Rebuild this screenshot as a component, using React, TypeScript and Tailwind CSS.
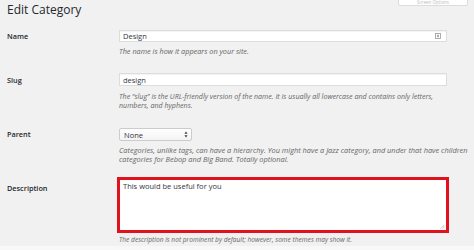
import React from 'react';

function FieldRow({ label, labelTop, children }: { label: string; labelTop: string; children: React.ReactNode }) {
    return (
        <div className="flex">
            <div className={`w-[119px] shrink-0 pl-[7px] text-[7.3px] font-semibold leading-[10px] text-[#23282d] ${labelTop}`}>
                {label}
            </div>
            <div className="w-[328px] shrink-0">{children}</div>
        </div>
    );
}

export default function App() {
    return (
        <div className="relative h-[250px] w-[474px] overflow-hidden bg-[#f1f1f1] font-['Open_Sans',sans-serif]">
            {/* screen options tab at the very top */}
            <div className="absolute left-[398px] top-[-1px] flex h-[7px] w-[70px] items-center justify-center rounded-b-[2px] border border-[#dcdcdc] bg-white text-[4.5px] leading-[5px] text-[#bbb]">
                Screen Options
            </div>

            <h1 className="pl-[7px] pt-[1px] text-[12px] font-normal leading-[17px] text-[#23282d]">Edit Category</h1>

            <div className="mt-[12px] flex flex-col">
                {/* Name */}
                <FieldRow label="Name" labelTop="pt-[1px]">
                    <div className="flex h-[12px] items-center justify-between border border-[#ddd] bg-white pl-[3px] pr-[5px] shadow-[inset_0_1px_1px_rgba(0,0,0,0.05)]">
                        <span className="text-[7.5px] leading-[10px] text-[#32373c]">Design</span>
                        <svg width="6" height="6" viewBox="0 0 6 6" className="shrink-0">
                            <rect x="0.5" y="0.5" width="5" height="5" fill="none" stroke="#999" strokeWidth="0.8" />
                            <rect x="2" y="1.8" width="2" height="2.4" fill="#aaa" />
                        </svg>
                    </div>
                    <p className="mt-[4.5px] text-[7.3px] italic leading-[9px] text-[#666]">
                        The name is how it appears on your site.
                    </p>
                </FieldRow>

                {/* Slug */}
                <div className="mt-[17.5px]">
                    <FieldRow label="Slug" labelTop="pt-[2px]">
                        <div className="flex h-[13px] items-center border border-[#ddd] bg-white pl-[3px] shadow-[inset_0_1px_1px_rgba(0,0,0,0.05)]">
                            <span className="text-[7.5px] leading-[10px] text-[#32373c]">design</span>
                        </div>
                        <p className="mt-[5.5px] whitespace-nowrap text-[7.1px] italic leading-[9px] text-[#666]">
                            The “slug” is the URL-friendly version of the name. It is usually all lowercase and contains only letters,
                            <br />
                            numbers, and hyphens.
                        </p>
                    </FieldRow>
                </div>

                {/* Parent */}
                <div className="mt-[18.5px]">
                    <FieldRow label="Parent" labelTop="pt-[1px]">
                        <div className="flex h-[13px] w-[73px] items-center justify-between rounded-[2px] border border-[#ccc] bg-gradient-to-b from-white to-[#f3f3f3] pl-[4px] pr-[3px]">
                            <span className="text-[7.5px] leading-[10px] text-[#32373c]">None</span>
                            <svg width="4" height="7" viewBox="0 0 4 7">
                                <path d="M2 0.5 L3.6 2.8 L0.4 2.8 Z" fill="#444" />
                                <path d="M2 6.5 L3.6 4.2 L0.4 4.2 Z" fill="#444" />
                            </svg>
                        </div>
                        <p className="mt-[4.5px] whitespace-nowrap text-[7.4px] italic leading-[9px] text-[#666]">
                            Categories, unlike tags, can have a hierarchy. You might have a Jazz category, and under that have children
                            <br />
                            categories for Bebop and Big Band. Totally optional.
                        </p>
                    </FieldRow>
                </div>

                {/* Description */}
                <div className="mt-[13.5px]">
                    <FieldRow label="Description" labelTop="pt-[6px]">
                        <div className="relative ml-[-2px] h-[56px] w-[332px] border-[3px] border-[#e0121b] bg-white px-[3px] pt-[1px]">
                            <p className="text-[7.5px] leading-[10px] text-[#32373c]">This would be useful for you</p>
                            <svg width="5" height="5" viewBox="0 0 5 5" className="absolute bottom-[1px] right-[1px]">
                                <path d="M4.5 0.8 L0.8 4.5 M4.5 2.8 L2.8 4.5" stroke="#aaa" strokeWidth="0.7" />
                            </svg>
                        </div>
                        <p className="mt-[3px] whitespace-nowrap text-[6.6px] italic leading-[8px] text-[#666]">
                            The description is not prominent by default; however, some themes may show it.
                        </p>
                    </FieldRow>
                </div>
            </div>

            <div className="absolute bottom-0 left-0 h-[4px] w-full bg-[#f8f8f8]" />
        </div>
    );
}
